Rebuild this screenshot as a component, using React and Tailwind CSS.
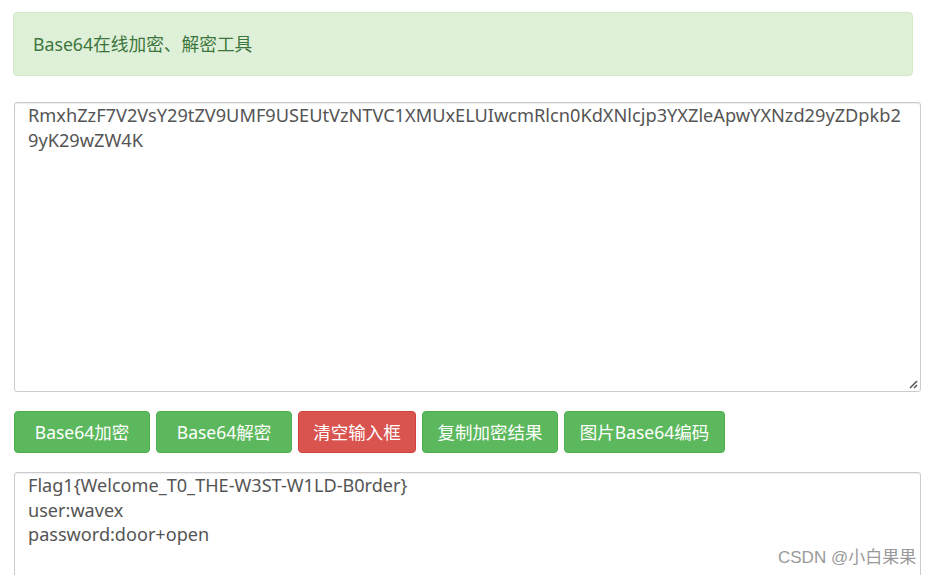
import React from "react";

const font = { fontFamily: '"Noto Sans", "Noto Sans CJK SC", sans-serif' };

function Btn({ children, red }) {
  return (
    <div
      className={
        "h-[42px] flex items-center justify-center rounded-[4px] border text-white text-[17.5px] " +
        (red ? "bg-[#d9534f] border-[#d43f3a]" : "bg-[#5cb85c] border-[#4cae4c]")
      }
    >
      {children}
    </div>
  );
}

export default function App() {
  return (
    <div className="relative w-[930px] h-[575px] overflow-hidden bg-white" style={font}>
      <div className="ml-[13px] mt-[12px] w-[900px] h-[64px] rounded-[4px] border border-[#d6e9c6] bg-[#dff0d8] text-[#3c763d] text-[17.7px] pl-[19px] flex items-center">
        Base64在线加密、解密工具
      </div>

      <div className="relative ml-[14px] mt-[26px] w-[907px] h-[290px] rounded-[3px] border border-[#cccccc] shadow-[inset_0_1px_1px_rgba(0,0,0,0.075)] pl-[13px] text-[18.2px] leading-[25px] text-[#555555] whitespace-pre">
        {"RmxhZzF7V2VsY29tZV9UMF9USEUtVzNTVC1XMUxELUIwcmRlcn0KdXNlcjp3YXZleApwYXNzd29yZDpkb2\n9yK29wZW4K"}
        <svg className="absolute right-[2px] bottom-[2px]" width="9" height="9" viewBox="0 0 9 9">
          <path d="M8 1 L1 8 M8 5 L5 8" stroke="#555" strokeWidth="1.5" />
        </svg>
      </div>

      <div className="ml-[14px] mt-[19px] flex gap-[6px]">
        <div className="w-[136px]"><Btn>Base64加密</Btn></div>
        <div className="w-[136px]"><Btn>Base64解密</Btn></div>
        <div className="w-[118px]"><Btn red>清空输入框</Btn></div>
        <div className="w-[136px]"><Btn>复制加密结果</Btn></div>
        <div className="w-[161px]"><Btn>图片Base64编码</Btn></div>
      </div>

      <div className="ml-[14px] mt-[19px] w-[907px] h-[200px] rounded-[3px] border border-[#cccccc] shadow-[inset_0_1px_1px_rgba(0,0,0,0.075)] pl-[13px] text-[18.1px] leading-[24.5px] text-[#555555] whitespace-pre">
        {"Flag1{Welcome_T0_THE-W3ST-W1LD-B0rder}\nuser:wavex\npassword:door+open"}
      </div>

      <div className="absolute left-[778px] top-[545px] text-[17px] text-[#999999]" style={{ fontFamily: '"Liberation Sans", "Noto Sans CJK SC", sans-serif' }}>
        CSDN @小白果果
      </div>
    </div>
  );
}
